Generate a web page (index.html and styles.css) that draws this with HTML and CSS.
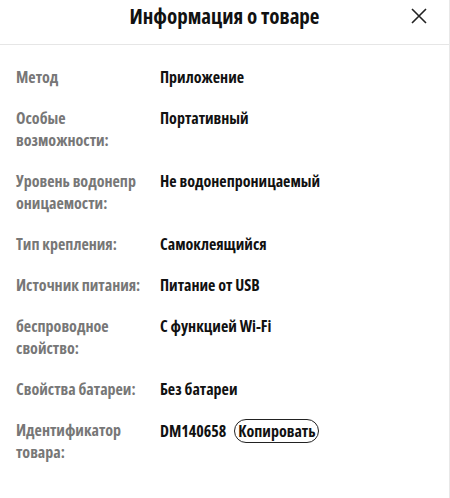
FILE: index.html
```html
<!DOCTYPE html>
<html lang="ru">
<head>
<meta charset="utf-8">
<link rel="stylesheet" href="styles.css">
</head>
<body>
<div class="sheet">
  <header class="head">
    <h1 class="title">Информация о товаре</h1>
    <button class="close" aria-label="Закрыть">
      <svg width="16" height="16" viewBox="0 0 16 16"><path d="M1 1L15 15M15 1L1 15" stroke="#222" stroke-width="1.6" fill="none"/></svg>
    </button>
  </header>
  <dl class="list">
    <div class="row"><dt class="label">Метод</dt><dd class="value">Приложение</dd></div>
    <div class="row"><dt class="label">Особые возможности:</dt><dd class="value">Портативный</dd></div>
    <div class="row"><dt class="label">Уровень водонепр<wbr>оницаемости:</dt><dd class="value">Не водонепроницаемый</dd></div>
    <div class="row"><dt class="label">Тип крепления:</dt><dd class="value">Самоклеящийся</dd></div>
    <div class="row"><dt class="label">Источник питания:</dt><dd class="value">Питание от USB</dd></div>
    <div class="row"><dt class="label">беспроводное свойство:</dt><dd class="value">С функцией Wi-Fi</dd></div>
    <div class="row"><dt class="label">Свойства батареи:</dt><dd class="value">Без батареи</dd></div>
    <div class="row"><dt class="label">Идентификатор товара:</dt><dd class="value">DM140658 <span class="copy">Копировать</span></dd></div>
  </dl>
</div>
</body>
</html>
```
FILE: styles.css
```css
* { box-sizing: border-box; }
html, body { margin: 0; padding: 0; background: #fff; }
body {
  font-family: "Open Sans", "Liberation Sans Narrow", "Liberation Sans", sans-serif;
  font-stretch: 78%;
  font-weight: 700;
  color: #111;
}
.sheet {
  width: 450px;
  height: 498px;
  border-right: 1px solid #e8e8e8;
}
.head {
  position: relative;
  height: 45px;
  border-bottom: 1px solid #e6e6e6;
  display: flex;
  align-items: center;
  justify-content: center;
}
.title {
  margin: 0;
  font-size: 21px;
  font-weight: 700;
  line-height: 28px;
  margin-top: -13px;
  color: #111;
}
.close {
  position: absolute;
  right: 21px;
  top: 7px;
  border: 0;
  background: none;
  padding: 0;
  width: 18px;
  height: 18px;
  display: flex;
  align-items: center;
  justify-content: center;
}
.list {
  margin: 0;
  padding: 21px 16px 0 16px;
  display: flex;
  flex-direction: column;
  gap: 19px;
}
.row {
  display: flex;
  align-items: flex-start;
  font-size: 16px;
  line-height: 22px;
}
.label {
  width: 144px;
  flex: none;
  color: #777;
}
.value {
  margin: 0;
  color: #111;
  display: flex;
  align-items: center;
  gap: 8px;
}
.copy {
  display: inline-block;
  border: 1px solid #222;
  border-radius: 12px;
  padding: 0 3px;
  line-height: 22px;
  font-size: 16px;
}
```
